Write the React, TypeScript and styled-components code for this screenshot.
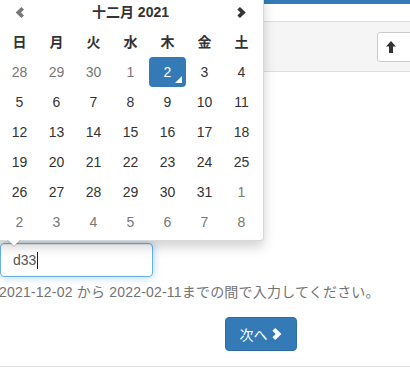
import styled, { createGlobalStyle } from 'styled-components'

const GlobalStyle = createGlobalStyle`
  html, body {
    margin: 0;
    padding: 0;
    background: #fff;
    overflow: hidden;
  }
  body {
    font-family: "Liberation Sans", "Noto Sans CJK JP", sans-serif;
    font-size: 14px;
    line-height: 20px;
    color: #333;
  }
`

const Page = styled.div`
  position: relative;
  width: 410px;
  height: 370px;
`

const TopBar = styled.div`
  height: 4px;
  background: #337ab7;
`

const Toolbar = styled.div`
  margin-top: 17px;
  height: 29px;
  padding: 10px 0;
  background: #f5f5f5;
  border-top: 1px solid #ddd;
  border-bottom: 1px solid #ddd;
  display: flex;
  justify-content: flex-end;
`

const IconButton = styled.button`
  width: 34px;
  height: 30px;
  margin-right: -1px;
  padding: 0 0 0 8px;
  display: flex;
  align-items: center;
  justify-content: flex-start;
  background: #fff;
  border: 1px solid #ccc;
  border-radius: 3px 0 0 3px;
  color: #333;
`

const Form = styled.div`
  padding-top: 171px;
`

const FakeInput = styled.div`
  box-sizing: border-box;
  width: 153px;
  height: 34px;
  padding: 6px 12px;
  display: flex;
  align-items: center;
  color: #555;
  font-size: 14px;
  border: 1px solid #66afe9;
  border-radius: 4px;
  box-shadow: inset 0 1px 1px rgba(0, 0, 0, 0.075), 0 0 8px rgba(102, 175, 233, 0.6);
`

const Caret = styled.span`
  display: inline-block;
  width: 1px;
  height: 17px;
  margin-left: 1px;
  background: #222;
`

const Help = styled.p`
  margin: 5px 0 0 -1px;
  color: #737373;
  letter-spacing: 0.2px;
  white-space: nowrap;
`

const ButtonRow = styled.div`
  margin-top: 15px;
  padding-left: 225px;
  padding-bottom: 15px;
  border-bottom: 1px solid #e5e5e5;
`

const PrimaryButton = styled.button`
  box-sizing: border-box;
  height: 34px;
  width: 72px;
  padding: 0 12px;
  display: inline-flex;
  align-items: center;
  justify-content: center;
  gap: 5px;
  font-family: "Liberation Sans", "Noto Sans CJK JP", sans-serif;
  font-size: 14px;
  color: #fff;
  background: #337ab7;
  border: 1px solid #2e6da4;
  border-radius: 4px;
`

const Picker = styled.div`
  position: absolute;
  top: -7px;
  left: -3px;
  padding: 3px;
  background: #fff;
  border: 1px solid rgba(0, 0, 0, 0.15);
  border-radius: 4px;
  box-shadow: 0 6px 12px rgba(0, 0, 0, 0.175);

  &::before {
    content: '';
    position: absolute;
    bottom: -7px;
    left: 9px;
    border-left: 7px solid transparent;
    border-right: 7px solid transparent;
    border-top: 7px solid rgba(0, 0, 0, 0.2);
  }

  &::after {
    content: '';
    position: absolute;
    bottom: -6px;
    left: 10px;
    border-left: 6px solid transparent;
    border-right: 6px solid transparent;
    border-top: 6px solid #fff;
  }
`

const Grid = styled.div`
  display: grid;
  grid-template-columns: repeat(7, 37px);
  grid-auto-rows: 30px;
`

const NavCell = styled.div<{ $muted?: boolean }>`
  display: flex;
  align-items: center;
  justify-content: center;
  color: ${(p) => (p.$muted ? '#777' : '#333')};
`

const Title = styled.div`
  grid-column: span 5;
  display: flex;
  align-items: center;
  justify-content: center;
  font-weight: bold;
`

const Dow = styled.div`
  display: flex;
  align-items: center;
  justify-content: center;
  font-weight: bold;
`

const Day = styled.div<{ $muted?: boolean; $active?: boolean }>`
  position: relative;
  display: flex;
  align-items: center;
  justify-content: center;
  border-radius: 4px;
  color: ${(p) => (p.$active ? '#fff' : p.$muted ? '#777' : '#333')};
  background: ${(p) => (p.$active ? '#337ab7' : 'transparent')};

  ${(p) =>
    p.$active &&
    `
    &::before {
      content: '';
      position: absolute;
      bottom: 4px;
      right: 4px;
      border-left: 7px solid transparent;
      border-bottom: 7px solid #fff;
    }
  `}
`

const Chevron = ({ dir, size = 11 }: { dir: 'left' | 'right'; size?: number }) => (
  <svg width={size * 0.85} height={size} viewBox="0 0 8.5 10" fill="currentColor">
    {dir === 'left' ? (
      <path d="M5.8 0 L8.2 2.3 L5.4 5 L8.2 7.7 L5.8 10 L0.6 5 Z" />
    ) : (
      <path d="M2.7 0 L0.3 2.3 L3.1 5 L0.3 7.7 L2.7 10 L7.9 5 Z" />
    )}
  </svg>
)

const ArrowUp = () => (
  <svg width="10" height="12" viewBox="0 0 10 12" fill="currentColor">
    <path d="M5 0 L10 5.5 H7 V12 H3 V5.5 H0 Z" />
  </svg>
)

type Cell = { d: number; muted?: boolean; active?: boolean }

const weeks: Cell[][] = [
  [{ d: 28, muted: true }, { d: 29, muted: true }, { d: 30, muted: true }, { d: 1, muted: true }, { d: 2, active: true }, { d: 3 }, { d: 4 }],
  [5, 6, 7, 8, 9, 10, 11].map((d) => ({ d })),
  [12, 13, 14, 15, 16, 17, 18].map((d) => ({ d })),
  [19, 20, 21, 22, 23, 24, 25].map((d) => ({ d })),
  [...[26, 27, 28, 29, 30, 31].map((d) => ({ d })), { d: 1, muted: true }],
  [2, 3, 4, 5, 6, 7, 8].map((d) => ({ d, muted: true })),
]

const dows = ['日', '月', '火', '水', '木', '金', '土']

export default function App() {
  return (
    <Page>
      <GlobalStyle />
      <TopBar />
      <Toolbar>
        <IconButton>
          <ArrowUp />
        </IconButton>
      </Toolbar>

      <Form>
        <FakeInput>
          d33
          <Caret />
        </FakeInput>
        <Help>2021-12-02 から 2022-02-11までの間で入力してください。</Help>
        <ButtonRow>
          <PrimaryButton>
            次へ
            <Chevron dir="right" size={12} />
          </PrimaryButton>
        </ButtonRow>
      </Form>

      <Picker>
        <Grid>
          <NavCell $muted>
            <Chevron dir="left" />
          </NavCell>
          <Title>十二月 2021</Title>
          <NavCell>
            <Chevron dir="right" />
          </NavCell>
          {dows.map((w) => (
            <Dow key={w}>{w}</Dow>
          ))}
          {weeks.flat().map((c, i) => (
            <Day key={i} $muted={c.muted} $active={c.active}>
              {c.d}
            </Day>
          ))}
        </Grid>
      </Picker>
    </Page>
  )
}
